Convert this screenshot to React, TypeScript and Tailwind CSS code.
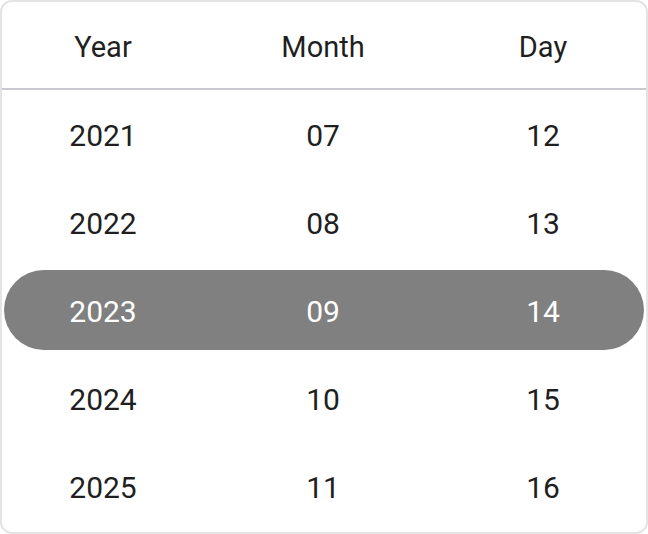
import React from "react";

const rows = [
  ["2021", "07", "12"],
  ["2022", "08", "13"],
  ["2023", "09", "14"],
  ["2024", "10", "15"],
  ["2025", "11", "16"],
];

export default function App() {
  return (
    <div
      className="w-[648px] h-[534px] bg-white border-2 border-[#e4e4e4] rounded-[12px] overflow-hidden flex flex-col"
      style={{ fontFamily: "Roboto, 'Noto Sans', sans-serif" }}
    >
      <div className="h-[88px] shrink-0 px-[2px] flex items-center border-b-2 border-[#cbc9d0] text-[29px] text-[#1f1f1f]">
        <div className="w-full grid grid-cols-3 gap-[22px] pr-[2px] items-center">
          <div className="text-center pt-[5px]">Year</div>
          <div className="text-center pt-[5px]">Month</div>
          <div className="text-center pt-[5px]">Day</div>
        </div>
      </div>
      <div className="flex flex-col">
        {rows.map((r, i) => {
          const sel = i === 2;
          return (
            <div key={i} className="h-[88px] flex items-center px-[2px]">
              <div
                className={
                  sel
                    ? "w-full h-[80px] grid grid-cols-3 gap-[22px] pr-[2px] items-center rounded-full bg-[#808080] text-white text-[30px]"
                    : "w-full h-[80px] grid grid-cols-3 gap-[22px] pr-[2px] items-center text-[#1f1f1f] text-[30px]"
                }
              >
                {r.map((v, j) => (
                  <div key={j} className="text-center pt-[3px]">
                    {v}
                  </div>
                ))}
              </div>
            </div>
          );
        })}
      </div>
    </div>
  );
}
